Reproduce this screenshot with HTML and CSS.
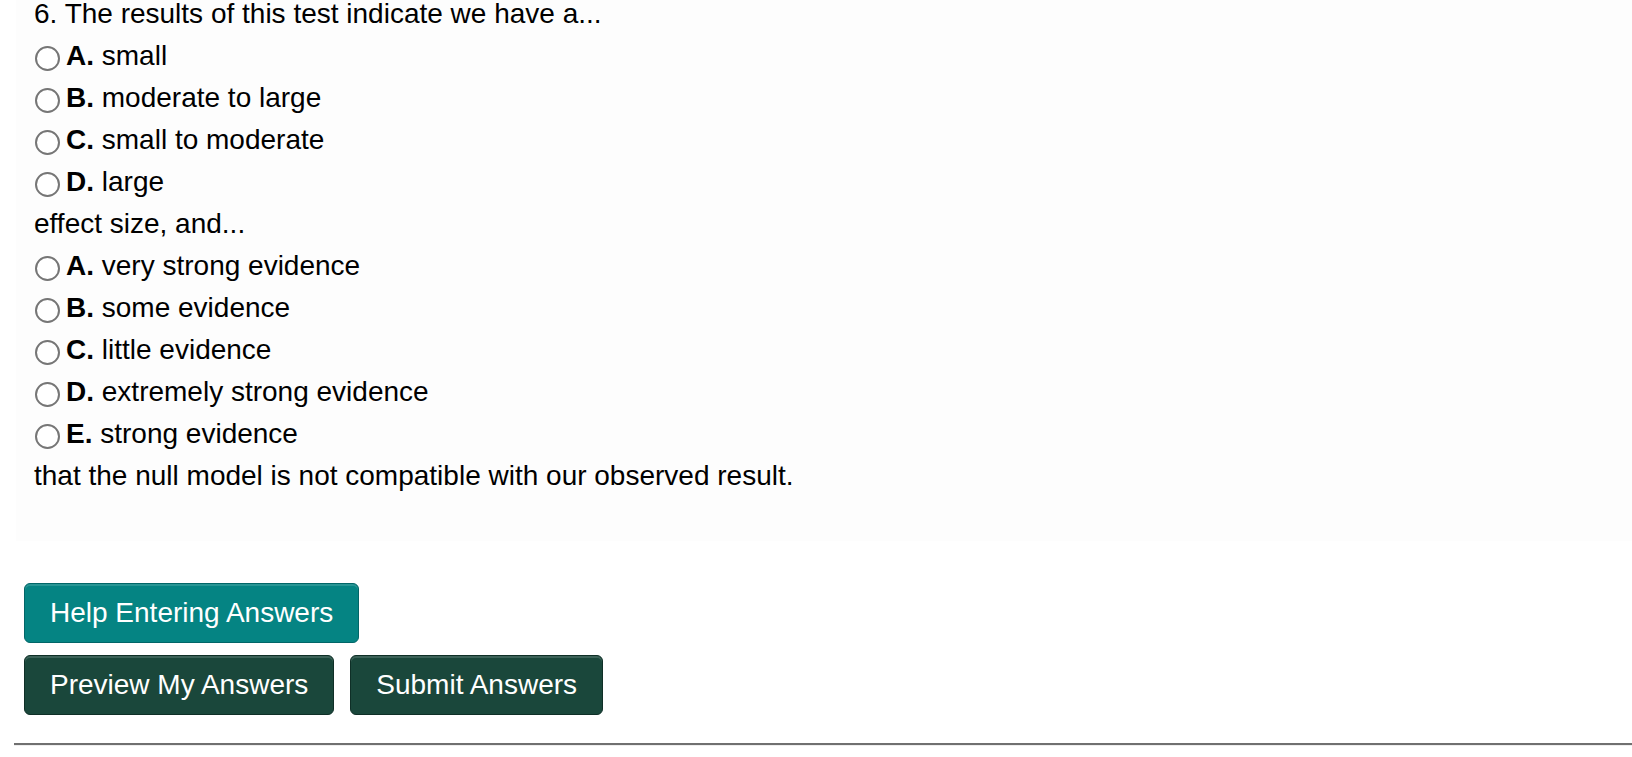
FILE: index.html
```html
<!DOCTYPE html>
<html>
<head>
<meta charset="utf-8">
<link rel="stylesheet" href="styles.css">
</head>
<body>
<div class="page">
  <div class="panel">
    <div class="lines">
      <div class="line">6. The results of this test indicate we have a...</div>
      <label class="opt"><span class="radio"></span><b>A.</b>&nbsp;small</label>
      <label class="opt"><span class="radio"></span><b>B.</b>&nbsp;moderate to large</label>
      <label class="opt"><span class="radio"></span><b>C.</b>&nbsp;small to moderate</label>
      <label class="opt"><span class="radio"></span><b>D.</b>&nbsp;large</label>
      <div class="line">effect size, and...</div>
      <label class="opt"><span class="radio"></span><b>A.</b>&nbsp;very strong evidence</label>
      <label class="opt"><span class="radio"></span><b>B.</b>&nbsp;some evidence</label>
      <label class="opt"><span class="radio"></span><b>C.</b>&nbsp;little evidence</label>
      <label class="opt"><span class="radio"></span><b>D.</b>&nbsp;extremely strong evidence</label>
      <label class="opt"><span class="radio"></span><b>E.</b>&nbsp;strong evidence</label>
      <div class="line">that the null model is not compatible with our observed result.</div>
    </div>
  </div>
  <div class="actions">
    <div class="row"><button class="btn btn-help">Help Entering Answers</button></div>
    <div class="row">
      <button class="btn btn-dark">Preview My Answers</button>
      <button class="btn btn-dark">Submit Answers</button>
    </div>
  </div>
  <hr class="rule">
</div>
</body>
</html>
```
FILE: styles.css
```css
html, body {
  margin: 0;
  padding: 0;
  background: #ffffff;
}
body {
  font-family: "Liberation Sans", Arial, sans-serif;
  font-size: 28px;
  color: #000;
}
.page {
  padding-left: 16px;
}
.panel {
  display: flow-root;
  background: #fdfdfd;
  padding: 0 18px 42px 18px;
  height: 499px;
}
.lines {
  margin-top: -7px;
  display: flex;
  flex-direction: column;
}
.line, .opt {
  line-height: 42px;
  height: 42px;
  white-space: nowrap;
}
.opt {
  display: flex;
  align-items: center;
}
.opt b {
  font-weight: bold;
}
.radio {
  display: inline-block;
  box-sizing: border-box;
  width: 25px;
  height: 25px;
  border: 2px solid #767676;
  border-radius: 50%;
  background: #fff;
  margin-left: 1px;
  margin-right: 6px;
  margin-top: 5px;
  flex: none;
}
.actions {
  margin-top: 42px;
  padding-left: 8px;
  display: flex;
  flex-direction: column;
  gap: 12px;
}
.row {
  display: flex;
  gap: 16px;
}
.btn {
  font-family: "Liberation Sans", Arial, sans-serif;
  font-size: 28px;
  line-height: 32px;
  color: #fff;
  padding: 13px 25px 13px 25px;
  border-radius: 6px;
  cursor: pointer;
}
.btn-help {
  background: #058483;
  border: 1px solid #026668;
  box-shadow: inset 0 2px 0 rgba(255,255,255,0.14);
}
.btn-dark {
  background: #1a473b;
  border: 1px solid #0f2f27;
  box-shadow: inset 0 2px 0 rgba(255,255,255,0.15);
}
.rule {
  margin: 28px 0 0 -2px;
  border: 0;
  border-top: 2px solid #707070;
  border-bottom: 1px solid #eeeeee;
  height: 0;
}
```
